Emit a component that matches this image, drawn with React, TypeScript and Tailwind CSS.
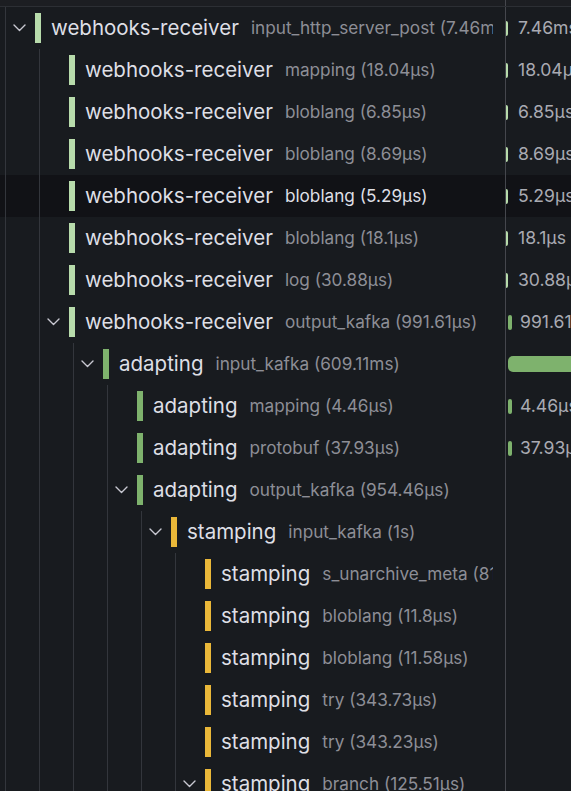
import type { ReactNode } from 'react';

type Tick = { kind: 'tick'; label: string; late?: boolean } | { kind: 'bar' };

interface SpanRow {
  depth: number;
  service: string;
  op: string;
  color: string;
  expandable?: boolean;
  active?: boolean;
  timing?: Tick;
}

const WR = 'bg-[#b7dbab]';
const AD = 'bg-[#7eb26d]';
const ST = 'bg-[#eab839]';

const rows: SpanRow[] = [
  { depth: 0, service: 'webhooks-receiver', op: 'input_http_server_post (7.46ms)', color: WR, expandable: true, timing: { kind: 'tick', label: '7.46ms' } },
  { depth: 1, service: 'webhooks-receiver', op: 'mapping (18.04μs)', color: WR, timing: { kind: 'tick', label: '18.04μs' } },
  { depth: 1, service: 'webhooks-receiver', op: 'bloblang (6.85μs)', color: WR, timing: { kind: 'tick', label: '6.85μs' } },
  { depth: 1, service: 'webhooks-receiver', op: 'bloblang (8.69μs)', color: WR, timing: { kind: 'tick', label: '8.69μs' } },
  { depth: 1, service: 'webhooks-receiver', op: 'bloblang (5.29μs)', color: WR, active: true, timing: { kind: 'tick', label: '5.29μs' } },
  { depth: 1, service: 'webhooks-receiver', op: 'bloblang (18.1μs)', color: WR, timing: { kind: 'tick', label: '18.1μs' } },
  { depth: 1, service: 'webhooks-receiver', op: 'log (30.88μs)', color: WR, timing: { kind: 'tick', label: '30.88μs' } },
  { depth: 1, service: 'webhooks-receiver', op: 'output_kafka (991.61μs)', color: WR, expandable: true, timing: { kind: 'tick', label: '991.61μs', late: true } },
  { depth: 2, service: 'adapting', op: 'input_kafka (609.11ms)', color: AD, expandable: true, timing: { kind: 'bar' } },
  { depth: 3, service: 'adapting', op: 'mapping (4.46μs)', color: AD, timing: { kind: 'tick', label: '4.46μs', late: true } },
  { depth: 3, service: 'adapting', op: 'protobuf (37.93μs)', color: AD, timing: { kind: 'tick', label: '37.93μs', late: true } },
  { depth: 3, service: 'adapting', op: 'output_kafka (954.46μs)', color: AD, expandable: true },
  { depth: 4, service: 'stamping', op: 'input_kafka (1s)', color: ST, expandable: true },
  { depth: 5, service: 'stamping', op: 's_unarchive_meta (81.4μs)', color: ST },
  { depth: 5, service: 'stamping', op: 'bloblang (11.8μs)', color: ST },
  { depth: 5, service: 'stamping', op: 'bloblang (11.58μs)', color: ST },
  { depth: 5, service: 'stamping', op: 'try (343.73μs)', color: ST },
  { depth: 5, service: 'stamping', op: 'try (343.23μs)', color: ST },
  { depth: 5, service: 'stamping', op: 'branch (125.51μs)', color: ST, expandable: true },
];

function Chevron() {
  return (
    <svg width="13" height="8" viewBox="0 0 13 8" fill="none" className="ml-[7px]">
      <polyline points="1,1 6.5,6.5 12,1" stroke="#c8c9d2" strokeWidth="1.4" strokeLinecap="round" strokeLinejoin="round" />
    </svg>
  );
}

function TimingCell({ timing }: { timing?: Tick }) {
  let content: ReactNode = null;
  if (timing?.kind === 'bar') {
    content = <span className="ml-[2px] h-[16px] w-[120px] shrink-0 rounded-[5px] bg-[#7eb26d]" />;
  } else if (timing) {
    content = (
      <>
        <span className={`h-[15px] w-[4px] shrink-0 rounded-full ${timing.late ? 'ml-[2px] mr-[8px] bg-[#7eb26d]' : 'ml-[-2px] mr-[10px] bg-[#b7dbab]'}`} />
        <span className="text-[17.6px] text-[#a9aab2]">{timing.label}</span>
      </>
    );
  }
  return <div className="flex min-w-0 flex-1 items-center overflow-hidden whitespace-nowrap">{content}</div>;
}

function Row({ row }: { row: SpanRow }) {
  return (
    <div className={`flex h-[42px] ${row.active ? 'bg-[#111216]' : ''}`}>
      <div className="ml-[5px] flex w-[500px] shrink-0 items-center border-l border-[#33363c] pr-[12px]">
        {Array.from({ length: row.depth }).map((_, i) => (
          <span key={i} className="h-full w-[34px] shrink-0 border-r border-[#33363c]" />
        ))}
        <span className="flex w-[29px] shrink-0 items-center">{row.expandable && <Chevron />}</span>
        <span className={`h-[30px] w-[6px] shrink-0 ${row.color}`} />
        <div className="flex min-w-0 flex-1 items-center overflow-hidden whitespace-nowrap">
          <span className="ml-[10px] text-[20.5px] text-[#dedfe5]">{row.service}</span>
          <span className={`ml-[12px] text-[17.2px] ${row.active ? 'text-[#dedfe5]' : 'text-[#8d8e96]'}`}>{row.op}</span>
        </div>
      </div>
      <div className="flex w-[1px] shrink-0 bg-[#45474d]" />
      <TimingCell timing={row.timing} />
    </div>
  );
}

export default function App() {
  return (
    <div
      className="h-[791px] w-[571px] overflow-hidden bg-[#181b1f]"
      style={{ fontFamily: 'Inter, "Noto Sans", sans-serif' }}
    >
      <div className="flex h-[7px] border-b border-[#2c2f34] bg-[#1c1e22]">
        <div className="w-[505px] shrink-0" />
        <div className="w-[1px] bg-[#45474d]" />
      </div>
      {rows.map((row, i) => (
        <Row key={i} row={row} />
      ))}
    </div>
  );
}
